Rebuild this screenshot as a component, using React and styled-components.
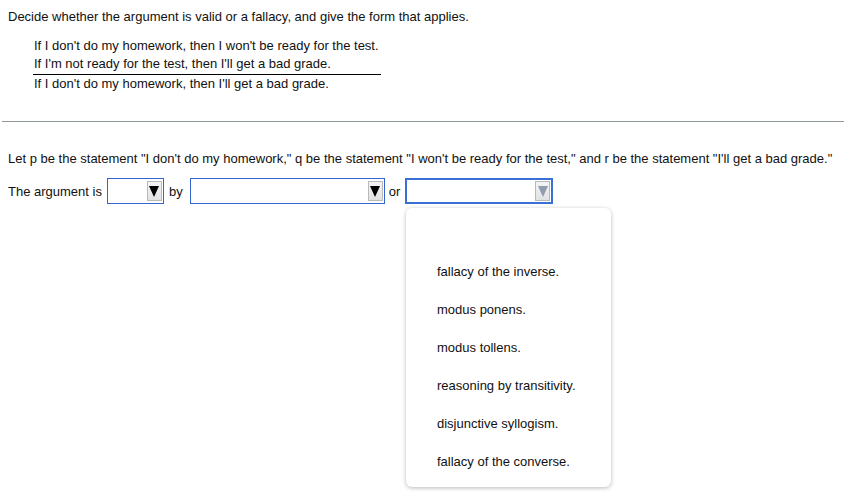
import React from "react";
import styled, { createGlobalStyle } from "styled-components";

const Global = createGlobalStyle`
  html, body { margin: 0; padding: 0; background: #fff; }
  body { font-family: "Liberation Sans", Arial, sans-serif; font-size: 13px; color: #111; }
`;

const Page = styled.div`
  width: 844px;
  height: 492px;
  overflow: hidden;
  position: relative;
`;

const Question = styled.div`
  padding: 9px 8px 0;
`;

const Line = styled.div`
  line-height: 16px;
`;

const Argument = styled.div`
  display: inline-block;
  margin: 12px 0 0 25px;
`;

const Premise = styled.div`
  line-height: 18px;
  padding-left: 1px;
  padding-right: 2px;
  border-bottom: ${(p) => (p.$rule ? "1px solid #000" : "none")};
  padding-bottom: ${(p) => (p.$rule ? "1px" : "0")};
`;

const Separator = styled.hr`
  margin: 28px 0 0 2px;
  border: none;
  height: 1px;
  background: #8f979b;
`;

const Answer = styled.div`
  padding: 0 8px;
`;

const Statement = styled.div`
  margin-top: 29px;
  line-height: 16px;
`;

const Row = styled.div`
  margin-top: 11px;
  display: flex;
  align-items: center;
  height: 26px;
  position: relative;
`;

const Label = styled.span`
  margin-right: ${(p) => p.$mr || 5}px;
  margin-left: ${(p) => p.$ml || 0}px;
`;

const Select = styled.div`
  box-sizing: border-box;
  width: ${(p) => p.$w}px;
  height: 26px;
  border: ${(p) => (p.$focus ? "2px solid #3a6fd8" : "1px solid #3366cc")};
  background: #fff;
  display: flex;
  justify-content: flex-end;
  align-items: center;
  padding-right: 1px;
  position: relative;
`;

const ArrowBtn = styled.div`
  box-sizing: border-box;
  width: 15px;
  height: 20px;
  background: linear-gradient(#f4f4f4, #e2e2e2);
  border: 1px solid #b9b9b9;
  display: flex;
  align-items: center;
  justify-content: center;
`;

const Triangle = styled.div`
  width: 0;
  height: 0;
  border-left: 5px solid transparent;
  border-right: 5px solid transparent;
  border-top: 11px solid ${(p) => (p.$muted ? "#8f9cb0" : "#000")};
  margin-top: 1px;
`;

const Menu = styled.ul`
  position: absolute;
  left: 406px;
  top: 208px;
  width: 205px;
  box-sizing: border-box;
  margin: 0;
  padding: 7px 0 6px;
  list-style: none;
  background: #fff;
  border-radius: 6px;
  box-shadow: 0 1px 4px rgba(0, 0, 0, 0.28);
`;

const Option = styled.li`
  height: 38px;
  line-height: 38px;
  padding-left: 31px;
  white-space: nowrap;
`;

const options = [
  "",
  "fallacy of the inverse.",
  "modus ponens.",
  "modus tollens.",
  "reasoning by transitivity.",
  "disjunctive syllogism.",
  "fallacy of the converse.",
];

function Dropdown({ width, focus }) {
  return (
    <Select $w={width} $focus={focus}>
      <ArrowBtn>
        <Triangle $muted={focus} />
      </ArrowBtn>
    </Select>
  );
}

export default function App() {
  return (
    <Page>
      <Global />
      <Question>
        <Line>Decide whether the argument is valid or a fallacy, and give the form that applies.</Line>
        <Argument>
          <Premise>If I don't do my homework, then I won't be ready for the test.</Premise>
          <Premise $rule>If I'm not ready for the test, then I'll get a bad grade.</Premise>
          <Premise>If I don't do my homework, then I'll get a bad grade.</Premise>
        </Argument>
      </Question>
      <Separator />
      <Answer>
        <Statement>
          Let p be the statement "I don't do my homework," q be the statement "I won't be ready for the test," and r be the statement "I'll get a bad grade."
        </Statement>
        <Row>
          <Label $mr={5}>The argument is</Label>
          <Dropdown width={57} />
          <Label $ml={5} $mr={7}>by</Label>
          <Dropdown width={195} />
          <Label $ml={4} $mr={5}>or</Label>
          <Dropdown width={148} focus />
        </Row>
      </Answer>
      <Menu>
        {options.map((o, i) => (
          <Option key={i}>{o}</Option>
        ))}
      </Menu>
    </Page>
  );
}
